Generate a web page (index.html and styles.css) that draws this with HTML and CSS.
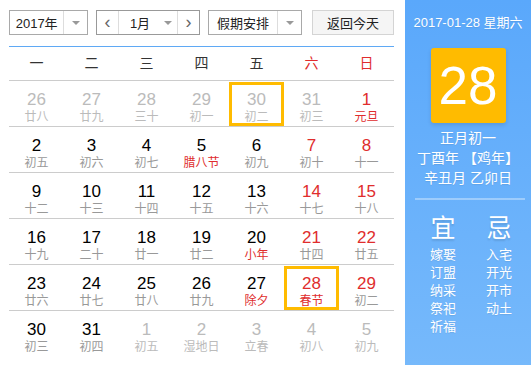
FILE: index.html
```html
<!DOCTYPE html>
<html lang="zh-CN">
<head>
  <meta charset="UTF-8">
  <title>万年历</title>
  <link rel="stylesheet" href="styles.css">
</head>
<body>
  <div class="calendar">
    <div class="main">
      <div class="toolbar">
        <div class="select year">
          <span class="select-text">2017年</span>
          <span class="select-arrow"><i class="caret"></i></span>
        </div>
        <div class="select month">
          <span class="nav">&lsaquo;</span>
          <span class="select-text">1月 <i class="caret"></i></span>
          <span class="nav">&rsaquo;</span>
        </div>
        <div class="select holiday">
          <span class="select-text">假期安排</span>
          <span class="select-arrow"><i class="caret"></i></span>
        </div>
        <button class="today-btn">返回今天</button>
      </div>

      <div class="grid">
        <div class="week">一</div>
        <div class="week">二</div>
        <div class="week">三</div>
        <div class="week">四</div>
        <div class="week">五</div>
        <div class="week red">六</div>
        <div class="week red">日</div>

        <div class="day other"><b>26</b><span>廿八</span></div>
        <div class="day other"><b>27</b><span>廿九</span></div>
        <div class="day other"><b>28</b><span>三十</span></div>
        <div class="day other"><b>29</b><span>初一</span></div>
        <div class="day other selected"><b>30</b><span>初二</span></div>
        <div class="day other"><b>31</b><span>初三</span></div>
        <div class="day weekend fest"><b>1</b><span>元旦</span></div>

        <div class="day"><b>2</b><span>初五</span></div>
        <div class="day"><b>3</b><span>初六</span></div>
        <div class="day"><b>4</b><span>初七</span></div>
        <div class="day fest"><b>5</b><span>腊八节</span></div>
        <div class="day"><b>6</b><span>初九</span></div>
        <div class="day weekend"><b>7</b><span>初十</span></div>
        <div class="day weekend"><b>8</b><span>十一</span></div>

        <div class="day"><b>9</b><span>十二</span></div>
        <div class="day"><b>10</b><span>十三</span></div>
        <div class="day"><b>11</b><span>十四</span></div>
        <div class="day"><b>12</b><span>十五</span></div>
        <div class="day"><b>13</b><span>十六</span></div>
        <div class="day weekend"><b>14</b><span>十七</span></div>
        <div class="day weekend"><b>15</b><span>十八</span></div>

        <div class="day"><b>16</b><span>十九</span></div>
        <div class="day"><b>17</b><span>二十</span></div>
        <div class="day"><b>18</b><span>廿一</span></div>
        <div class="day"><b>19</b><span>廿二</span></div>
        <div class="day fest"><b>20</b><span>小年</span></div>
        <div class="day weekend"><b>21</b><span>廿四</span></div>
        <div class="day weekend"><b>22</b><span>廿五</span></div>

        <div class="day"><b>23</b><span>廿六</span></div>
        <div class="day"><b>24</b><span>廿七</span></div>
        <div class="day"><b>25</b><span>廿八</span></div>
        <div class="day"><b>26</b><span>廿九</span></div>
        <div class="day fest"><b>27</b><span>除夕</span></div>
        <div class="day weekend fest selected"><b>28</b><span>春节</span></div>
        <div class="day weekend"><b>29</b><span>初二</span></div>

        <div class="day last"><b>30</b><span>初三</span></div>
        <div class="day last"><b>31</b><span>初四</span></div>
        <div class="day last other"><b>1</b><span>初五</span></div>
        <div class="day last other"><b>2</b><span>湿地日</span></div>
        <div class="day last other"><b>3</b><span>立春</span></div>
        <div class="day last other"><b>4</b><span>初八</span></div>
        <div class="day last other"><b>5</b><span>初九</span></div>
      </div>
    </div>

    <aside class="side">
      <p class="side-date">2017-01-28 星期六</p>
      <div class="side-day">28</div>
      <div class="side-lunar">
        <p>正月初一</p>
        <p>丁酉年 【鸡年】</p>
        <p>辛丑月 乙卯日</p>
      </div>
      <div class="side-line"></div>
      <div class="almanac">
        <div class="almanac-col">
          <h3>宜</h3>
          <p>嫁娶</p>
          <p>订盟</p>
          <p>纳采</p>
          <p>祭祀</p>
          <p>祈福</p>
        </div>
        <div class="almanac-col">
          <h3>忌</h3>
          <p>入宅</p>
          <p>开光</p>
          <p>开市</p>
          <p>动土</p>
        </div>
      </div>
    </aside>
  </div>
</body>
</html>
```

FILE: styles.css
```css
* {
  margin: 0;
  padding: 0;
  box-sizing: border-box;
}

body {
  font-family: "Liberation Sans", "Noto Sans CJK SC", sans-serif;
  background-color: #fff;
  color: #333;
  width: 531px;
  height: 365px;
  overflow: hidden;
}

.calendar {
  display: flex;
  height: 365px;
}

.main {
  width: 405px;
  padding: 10px 11px 0 9px;
}

/* toolbar */
.toolbar {
  display: flex;
  height: 25px;
  font-size: 13px;
}

.select {
  display: flex;
  border: 1px solid #a9a9a9;
  background-color: #fff;
  color: #222;
}

.select-text {
  display: flex;
  align-items: center;
  justify-content: center;
}

.select-arrow {
  display: flex;
  align-items: center;
  justify-content: center;
  width: 24px;
  border-left: 1px solid #ddd;
}

.caret {
  display: inline-block;
  width: 0;
  height: 0;
  border-left: 4px solid transparent;
  border-right: 4px solid transparent;
  border-top: 4px solid #999;
}

.year {
  width: 79px;
}

.year .select-text {
  width: 54px;
}

.month {
  width: 104px;
  margin-left: 8px;
  border-color: #999;
}

.month .nav {
  display: flex;
  align-items: center;
  justify-content: center;
  width: 21px;
  font-size: 18px;
  color: #666;
  line-height: 1;
  padding-bottom: 2px;
}

.month .select-text {
  width: 60px;
  gap: 14px;
  border-left: 1px solid #ddd;
  border-right: 1px solid #ddd;
  padding-left: 6px;
}

.holiday {
  width: 94px;
  margin-left: 8px;
}

.holiday .select-text {
  width: 69px;
}

.today-btn {
  width: 82px;
  margin-left: 10px;
  border: 1px solid #d4d4d4;
  background-color: #f5f5f5;
  font-family: inherit;
  font-size: 13px;
  color: #222;
}

/* days grid */
.grid {
  display: grid;
  grid-template-columns: repeat(7, 55px);
  margin-top: 11px;
  border-top: 1px solid #5fa9f5;
}

.week {
  height: 34px;
  line-height: 33px;
  text-align: center;
  font-size: 14px;
  color: #333;
  border-bottom: 1px solid #ccc;
}

.week.red {
  color: #e02d2d;
}

.day {
  display: flex;
  flex-direction: column;
  align-items: center;
  height: 46px;
  padding-top: 9px;
  border-bottom: 1px solid #ccc;
}

.day.last {
  border-bottom: none;
}

.day b {
  font-weight: normal;
  font-size: 17px;
  line-height: 19px;
  color: #000;
}

.day span {
  font-size: 12px;
  line-height: 16px;
  color: #999;
}

.day.weekend b {
  color: #e02d2d;
}

.day.fest span {
  color: #e02d2d;
}

.day.other b,
.day.other span {
  color: #bbb;
}

.day.selected {
  box-shadow: inset 0 0 0 3px #ffbb00;
  margin-top: 1px;
  height: 45px;
  padding-top: 8px;
}

/* side panel */
.side {
  width: 126px;
  background: linear-gradient(#5aa8fb, #76b9fb);
  color: #fff;
  text-align: center;
  text-shadow: 0 1px 1px rgba(0, 0, 0, 0.08);
}

.side-date {
  margin-top: 14px;
  font-size: 13px;
  line-height: 18px;
}

.side-day {
  width: 75px;
  height: 75px;
  margin: 16px auto 0;
  background-color: #ffbb00;
  border-radius: 3px;
  box-shadow: 0 2px 4px rgba(0, 0, 0, 0.12);
  font-size: 53px;
  line-height: 75px;
  text-shadow: none;
}

.side-lunar {
  margin-top: 5px;
  font-size: 14px;
  line-height: 20px;
}

.side-line {
  height: 2px;
  margin: 10px 6px 0 10px;
  background-color: rgba(255, 255, 255, 0.35);
}

.almanac {
  display: flex;
  padding: 0 4px 0 10px;
}

.almanac-col {
  width: 56px;
}

.almanac-col h3 {
  font-weight: normal;
  font-size: 25px;
  line-height: 30px;
  margin-top: 13px;
  margin-bottom: 3px;
  text-shadow: 0 2px 2px rgba(0, 0, 0, 0.12);
}

.almanac-col p {
  font-size: 13px;
  line-height: 18px;
}
```
